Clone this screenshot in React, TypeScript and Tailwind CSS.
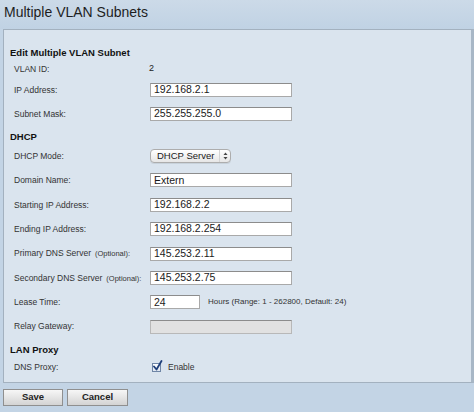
import React from 'react'

const font = { fontFamily: '"Liberation Sans", Arial, Helvetica, sans-serif' }

function Heading({ children, h }: { children: React.ReactNode; h: string }) {
  return (
    <div className={`flex items-center pl-[6px] text-[9.5px] font-bold text-[#111] ${h}`}>{children}</div>
  )
}

function Row({ label, hint, children, h = 'h-[24.4px]' }: { label: string; hint?: string; children?: React.ReactNode; h?: string }) {
  return (
    <div className={`flex items-center pl-[10px] ${h}`}>
      <div className="w-[136px] shrink-0 text-[8.5px] text-[#333]">
        {label}
        {hint && <span className="ml-[4px] text-[7.5px]">{hint}</span>}
      </div>
      {children}
    </div>
  )
}

function TextBox({ value, w = 'w-[142px]', disabled }: { value?: string; w?: string; disabled?: boolean }) {
  return (
    <div
      className={`${w} h-[14px] flex items-center pl-[3px] border border-[#a9a9a9] border-t-[#8c8c8c] text-[10.5px] text-[#1a1a1a] ${
        disabled ? 'bg-[#e1e1e1] border-[#b8b8b8]' : 'bg-white'
      }`}
    >
      {value}
    </div>
  )
}

function Select({ value }: { value: string }) {
  return (
    <div className="w-[81px] h-[14px] flex items-center rounded-[4px] border border-[#adadad] bg-gradient-to-b from-white to-[#e6e6e6] shadow-[0_1px_0_rgba(0,0,0,0.08)]">
      <span className="pl-[6px] flex-1 whitespace-nowrap text-[9.5px] text-[#1a1a1a]">{value}</span>
      <div className="w-[11px] h-full flex items-center justify-center border-l border-[#d4d4d4]">
        <svg width="5" height="8" viewBox="0 0 5 8">
          <path d="M2.5 0.5 L4.5 3 L0.5 3 Z" fill="#444" />
          <path d="M2.5 7.5 L4.5 5 L0.5 5 Z" fill="#444" />
        </svg>
      </div>
    </div>
  )
}

function CheckBox() {
  return (
    <div className="relative w-[9px] h-[9px] border border-[#6f86a6] bg-gradient-to-b from-white to-[#dfe7f1]">
      <svg className="absolute left-[-1px] top-[-4px]" width="12" height="12" viewBox="0 0 12 12">
        <path d="M2 6.5 L4.5 9.5 L9.5 1" fill="none" stroke="#1f3f7a" strokeWidth="1.8" strokeLinecap="round" strokeLinejoin="round" />
      </svg>
    </div>
  )
}

function Button({ children, w }: { children: React.ReactNode; w: string }) {
  return (
    <button
      className={`${w} h-[17px] flex items-center justify-center border border-[#8f8f8f] bg-gradient-to-b from-[#f7f7f7] to-[#d3d3d3] text-[9.5px] font-bold text-[#222]`}
    >
      {children}
    </button>
  )
}

export default function App() {
  return (
    <div className="w-[474px] h-[412px] bg-[#c3d4e5] overflow-hidden" style={font}>
      <div className="h-[29px] pb-[5px] pl-[4px] flex items-center bg-gradient-to-b from-[#ccdae8] to-[#c0d2e4] text-[14px] text-[#1e1e1e]">
        Multiple VLAN Subnets
      </div>

      <div className="ml-[3px] h-[354px] pt-[16px] border-l border-t border-b border-[#a3b1bf] border-r-[3px] border-r-[#a8b7c6] bg-[#dae4ee]">
        <Heading h="h-[14px]">Edit Multiple VLAN Subnet</Heading>
        <Row label="VLAN ID:" h="h-[18px]">
          <span className="-ml-[1px] text-[9px] text-[#222]">2</span>
        </Row>
        <Row label="IP Address:" h="h-[24px]">
          <TextBox value="192.168.2.1" />
        </Row>
        <Row label="Subnet Mask:" h="h-[24px]">
          <TextBox value="255.255.255.0" />
        </Row>

        <Heading h="h-[22px]">DHCP</Heading>
        <Row label="DHCP Mode:" h="h-[16px]">
          <Select value="DHCP Server" />
        </Row>
        <div className="pt-[4.3px]">
          <Row label="Domain Name:">
            <TextBox value="Extern" />
          </Row>
          <Row label="Starting IP Address:">
            <TextBox value="192.168.2.2" />
          </Row>
          <Row label="Ending IP Address:">
            <TextBox value="192.168.2.254" />
          </Row>
          <Row label="Primary DNS Server" hint="(Optional):">
            <TextBox value="145.253.2.11" />
          </Row>
          <Row label="Secondary DNS Server" hint="(Optional):">
            <TextBox value="145.253.2.75" />
          </Row>
          <Row label="Lease Time:">
            <TextBox value="24" w="w-[50px]" />
            <span className="ml-[8px] text-[8px] text-[#333]">Hours (Range: 1 - 262800, Default: 24)</span>
          </Row>
          <Row label="Relay Gateway:">
            <TextBox disabled />
          </Row>
        </div>

        <Heading h="h-[23px]">LAN Proxy</Heading>
        <Row label="DNS Proxy:" h="h-[10px]">
          <div className="flex items-center gap-[7px] pl-[2px]">
            <CheckBox />
            <span className="text-[8.5px] text-[#333]">Enable</span>
          </div>
        </Row>
      </div>

      <div className="flex gap-[4px] pl-[3px] pt-[6px]">
        <Button w="w-[60px]">Save</Button>
        <Button w="w-[61px]">Cancel</Button>
      </div>
    </div>
  )
}
